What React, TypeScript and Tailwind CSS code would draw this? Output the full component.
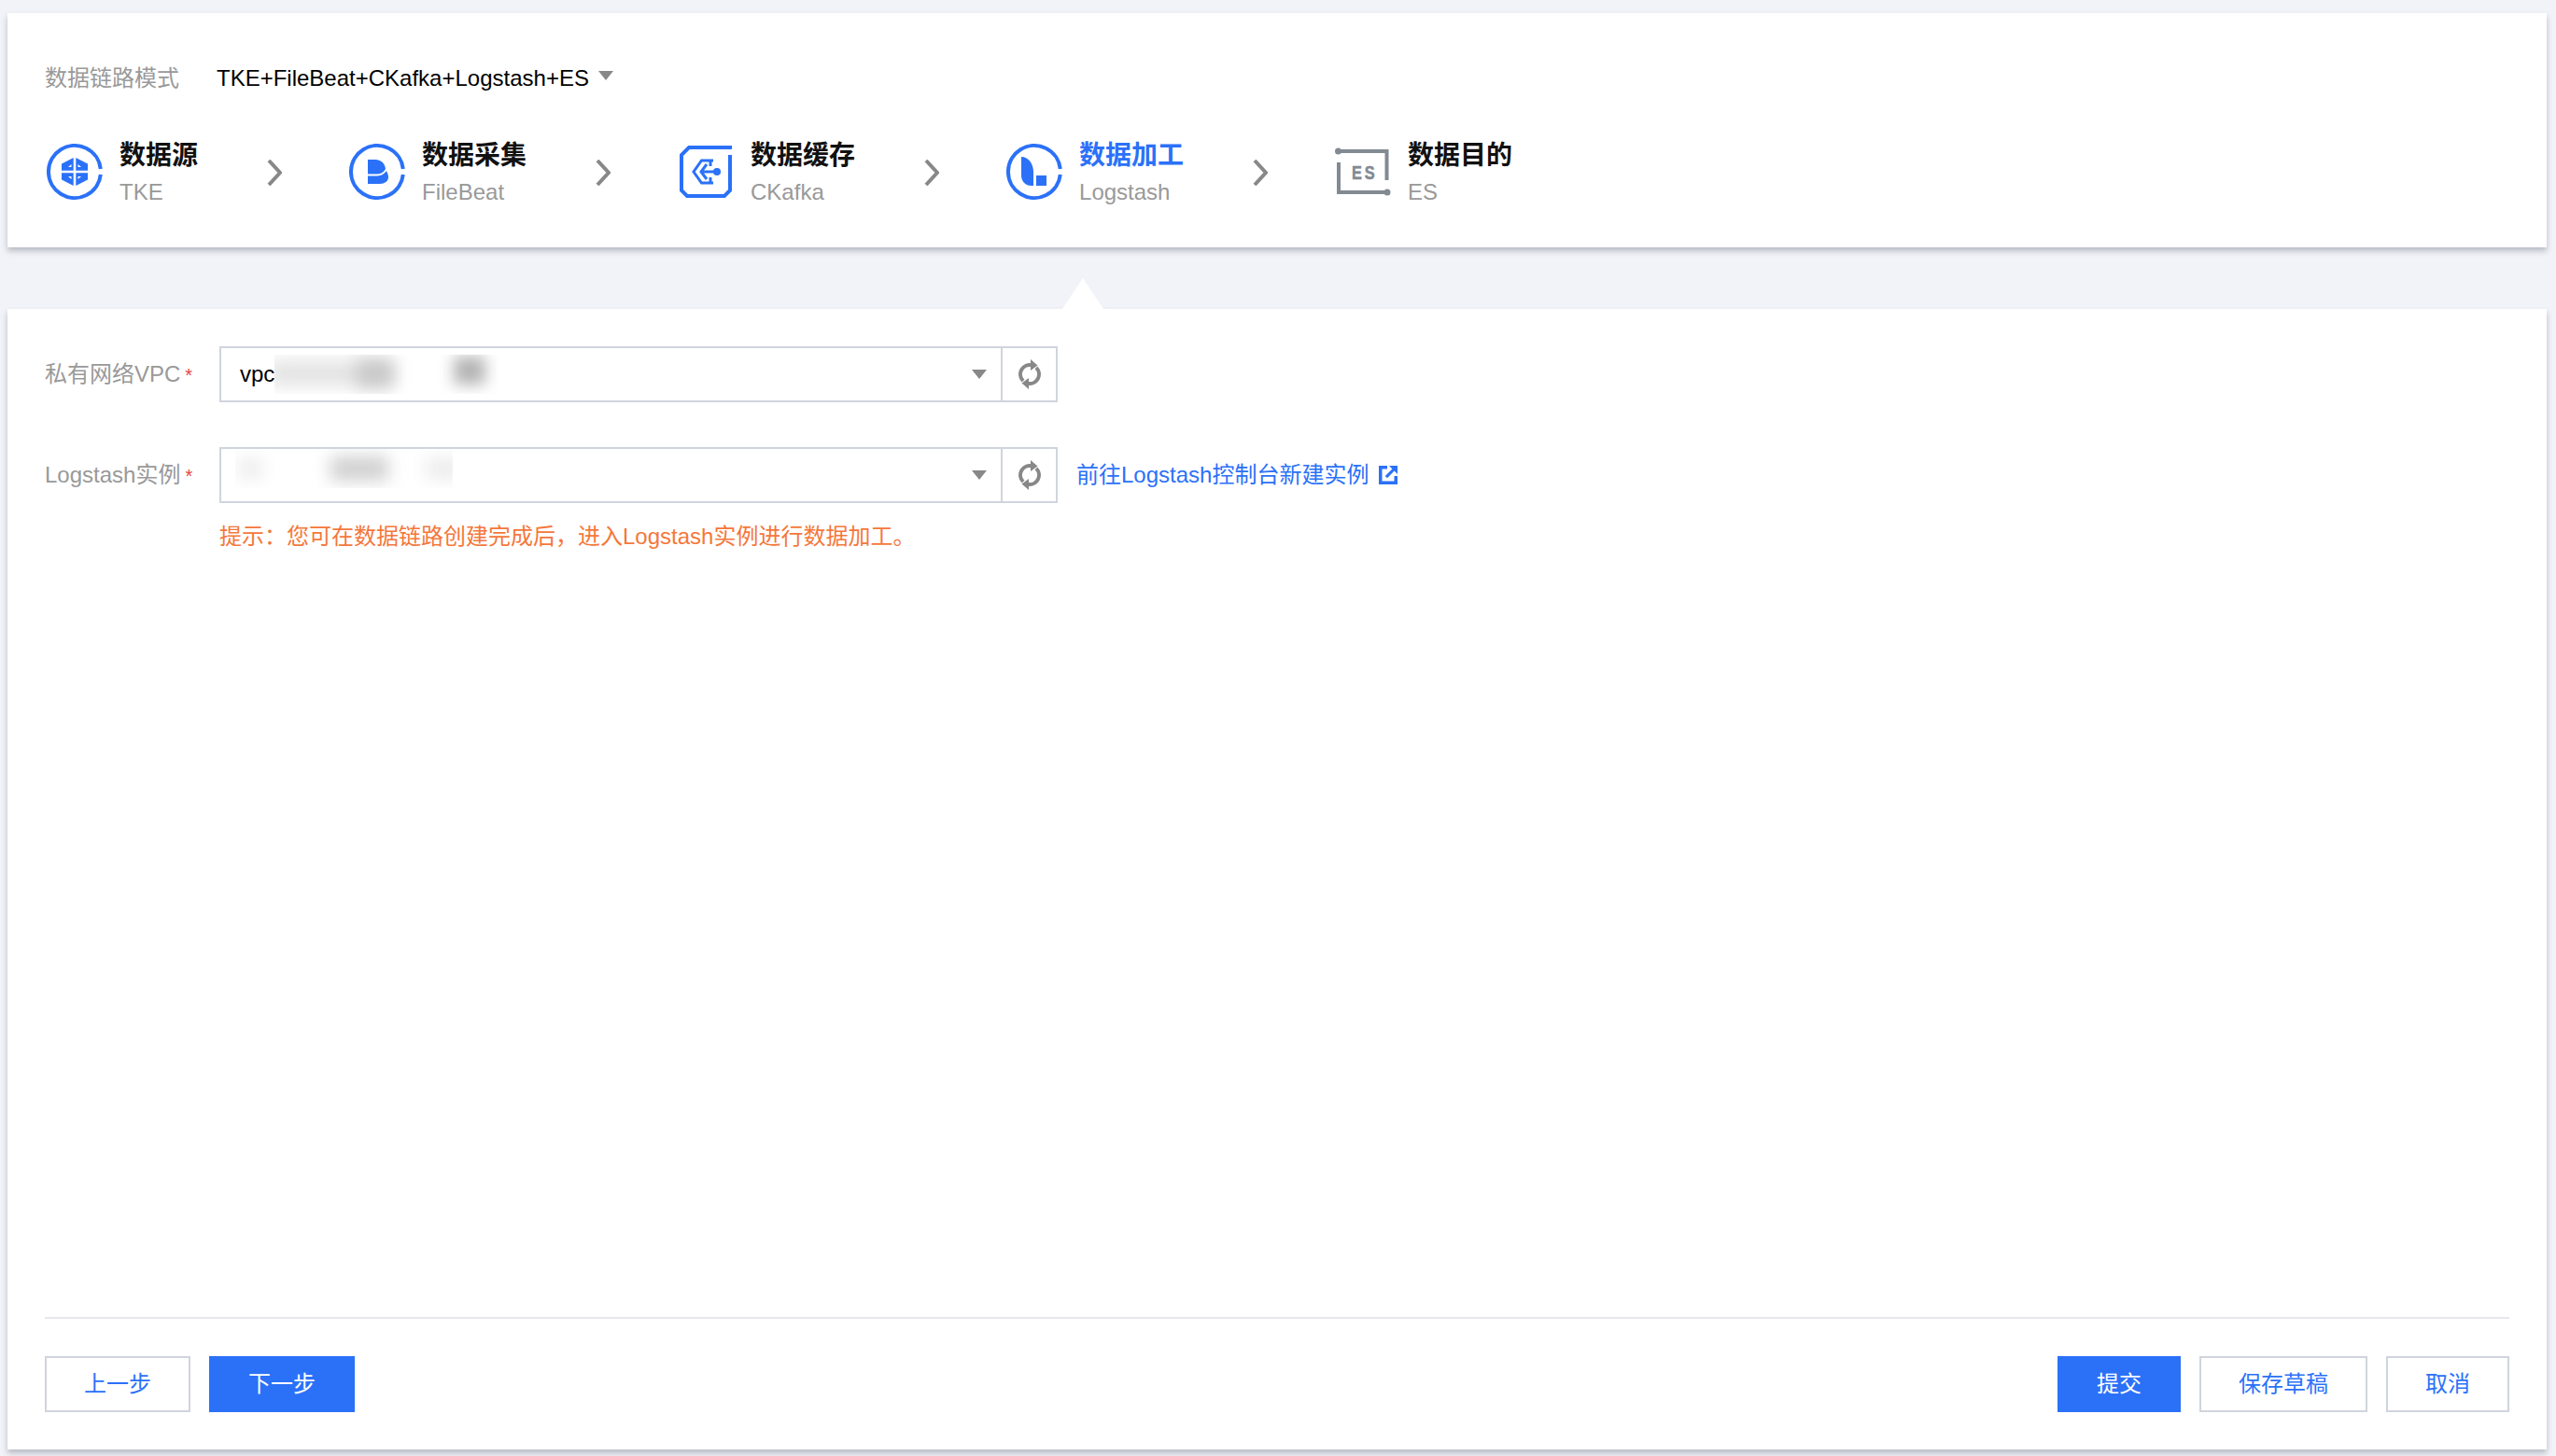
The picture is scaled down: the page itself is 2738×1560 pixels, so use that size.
import React from 'react';

const fontStack = { fontFamily: '"Liberation Sans", "Noto Sans CJK SC", sans-serif' };

function Ring() {
  return <path d="M57.8 27A28 28 0 1 0 57.8 33" fill="none" stroke="#2b71f8" strokeWidth="4" />;
}

function TkeIcon() {
  return (
    <svg width="60" height="60" viewBox="0 0 60 60" className="shrink-0 mt-[7px]">
      <Ring />
      <g fill="#2b71f8">
        <path d="M28.7 15L16 21.5V28.7H28.7Z" />
        <path d="M31.3 15L44 21.5V28.7H31.3Z" />
        <path d="M28.7 45L16 38.5V31.3H28.7Z" />
        <path d="M31.3 45L44 38.5V31.3H31.3Z" />
      </g>
      <g fill="#fff">
        <path d="M26.5 22V25H23Z" />
        <path d="M33.5 22V25H37Z" />
        <path d="M26.5 38V35H23Z" />
        <path d="M33.5 38V35H37Z" />
      </g>
    </svg>
  );
}

function FileBeatIcon() {
  return (
    <svg width="60" height="60" viewBox="0 0 60 60" className="shrink-0 mt-[7px]">
      <Ring />
      <path d="M20 17H28C35 17 39 22 39 28C41.5 31 42 34 42 36C42 40 38 43 33 43H20Z" fill="#2b71f8" />
      <path d="M19 33.5H30C34 33.5 37 32 39.5 28" fill="none" stroke="#fff" strokeWidth="1.8" />
    </svg>
  );
}

function CKafkaIcon() {
  return (
    <svg width="60" height="60" viewBox="0 0 60 60" className="shrink-0 mt-[7px]">
      <path d="M58 4H12L4 12V50L10 56H50L56 50V12" fill="none" stroke="#2b71f8" strokeWidth="4" />
      <path d="M38 18H25.5L17 30L25.5 42H38" fill="none" stroke="#2b71f8" strokeWidth="3" />
      <path d="M31 22L25 30L31 38" fill="none" stroke="#2b71f8" strokeWidth="3" />
      <path d="M27 30H42" fill="none" stroke="#2b71f8" strokeWidth="3" />
      <path d="M35 18V24M35 36V42" fill="none" stroke="#2b71f8" strokeWidth="3" />
      <circle cx="42" cy="30" r="4" fill="#2b71f8" />
    </svg>
  );
}

function LogstashIcon() {
  return (
    <svg width="60" height="60" viewBox="0 0 60 60" className="shrink-0 mt-[7px]">
      <Ring />
      <path d="M16 14C24 14 29 22 29 30V45H27C20 45 16 40 16 34Z" fill="#2b71f8" />
      <rect x="32" y="34" width="11" height="11" fill="#2b71f8" />
    </svg>
  );
}

function EsIcon() {
  return (
    <svg width="60" height="60" viewBox="0 0 60 60" className="shrink-0 mt-[7px]">
      <path d="M3 8H55.5V39" fill="none" stroke="#828a92" strokeWidth="4" />
      <path d="M4 20V52H56" fill="none" stroke="#828a92" strokeWidth="4" />
      <circle cx="3.5" cy="8" r="3.5" fill="#828a92" />
      <circle cx="56" cy="52" r="3.5" fill="#828a92" />
      <text
        transform="translate(18 38) scale(0.78 1)"
        fontSize="21"
        fontWeight="700"
        letterSpacing="3.5"
        fill="#828a92"
        stroke="#828a92"
        strokeWidth="0.5"
        fontFamily="Liberation Sans, sans-serif"
      >
        ES
      </text>
    </svg>
  );
}

function Chevron() {
  return (
    <svg width="16" height="28" viewBox="0 0 16 28" className="shrink-0 ml-[74px] mr-[72px] mt-[24px]">
      <path d="M2 1L14 14L2 27" fill="none" stroke="#888" strokeWidth="4" />
    </svg>
  );
}

function Caret() {
  return (
    <svg width="16" height="10" viewBox="0 0 16 10" className="shrink-0">
      <path d="M0 0H16L8 10Z" fill="#888" />
    </svg>
  );
}

function RefreshIcon() {
  return (
    <svg width="24" height="32" viewBox="0 0 24 32">
      <g fill="none" stroke="#888" strokeWidth="4">
        <path d="M14.5 6.3A10 10 0 0 0 5 23.1" />
        <path d="M9.5 25.7A10 10 0 0 0 19 8.9" />
      </g>
      <path d="M13 0L20.5 6.5L13 12Z" fill="#888" />
      <path d="M11 20L3.5 25.5L11 32Z" fill="#888" />
    </svg>
  );
}

function ExternalIcon() {
  return (
    <svg width="20" height="20" viewBox="0 0 20 20" className="shrink-0 ml-[11px]">
      <path d="M9 1.75H1.75V18.25H18.25V11" fill="none" stroke="#2b71f8" strokeWidth="3.5" />
      <path d="M11 0H20V9L16.6 5.6L9 13.2L6.8 11L14.4 3.4Z" fill="#2b71f8" />
    </svg>
  );
}

const steps = [
  { title: '数据源', sub: 'TKE', icon: <TkeIcon /> },
  { title: '数据采集', sub: 'FileBeat', icon: <FileBeatIcon /> },
  { title: '数据缓存', sub: 'CKafka', icon: <CKafkaIcon /> },
  { title: '数据加工', sub: 'Logstash', icon: <LogstashIcon />, active: true },
  { title: '数据目的', sub: 'ES', icon: <EsIcon /> },
];

function SelectBox({ children, text }: { children: React.ReactNode; text?: string }) {
  return (
    <div className="relative flex w-[898px] h-[60px] border-2 border-[#d0d4dd] bg-white">
      <div className="flex-1 flex items-center justify-between pl-5 pr-[15px] text-[24px] text-black">
        <span>{text}</span>
        <Caret />
      </div>
      <div className="w-[59px] shrink-0 flex items-center justify-center border-l-2 border-[#d0d4dd]">
        <RefreshIcon />
      </div>
      {children}
    </div>
  );
}

function OutlineButton({ label, width }: { label: string; width: string }) {
  return (
    <button className={`${width} h-[60px] border-2 border-[#d0d4dd] bg-white text-[24px] text-[#2b71f8]`}>{label}</button>
  );
}

function PrimaryButton({ label, width }: { label: string; width: string }) {
  return <button className={`${width} h-[60px] bg-[#2b71f8] text-[24px] text-white`}>{label}</button>;
}

export default function App() {
  return (
    <div className="w-full h-[1560px] bg-[#f2f3f8] pt-[14px] pl-2 pr-[10px] pb-[7px] flex flex-col overflow-hidden" style={fontStack}>
      <div className="h-[251px] shrink-0 bg-white pt-[52px] px-10 shadow-[0_4px_6px_0_rgba(54,58,80,0.3)]">
        <div className="flex items-center h-[36px] text-[24px] leading-[36px]">
          <span className="w-[184px] text-[#999]">数据链路模式</span>
          <span className="text-black">TKE+FileBeat+CKafka+Logstash+ES</span>
          <span className="ml-[10px] -mt-[6px]">
            <Caret />
          </span>
        </div>
        <div className="flex items-start mt-[45px] ml-[2px]">
          {steps.map((s, i) => (
            <React.Fragment key={s.title}>
              {s.icon}
              <div className="ml-[18px] shrink-0">
                <div className={`mt-[2px] text-[28px] leading-[36px] font-bold ${s.active ? 'text-[#2b71f8]' : 'text-[#111]'}`}>{s.title}</div>
                <div className="mt-[3px] text-[24px] leading-[36px] text-[#999]">{s.sub}</div>
              </div>
              {i < steps.length - 1 && <Chevron />}
            </React.Fragment>
          ))}
        </div>
      </div>

      <div className="relative mt-[66px] flex-1 flex flex-col bg-white px-10 pt-10 pb-10 shadow-[0_4px_6px_0_rgba(54,58,80,0.3)]">
        <svg width="44" height="33" viewBox="0 0 44 33" className="absolute left-[1130px] -top-[33px]">
          <path d="M22 0L44 33H0Z" fill="#fff" />
        </svg>

        <div className="flex-1">
          <div className="flex items-center">
            <div className="w-[187px] shrink-0 text-[24px] text-[#999]">
              私有网络VPC<span className="ml-[5px] text-[20px] text-[#e54545]">*</span>
            </div>
            <SelectBox text="vpc">
              <div className="absolute left-[57px] top-[7px] w-[240px] h-[42px] overflow-hidden">
                <div className="absolute left-[-6px] top-[6px] w-[130px] h-[28px] bg-[#e4e4e4] blur-[9px]" />
                <div className="absolute left-[88px] top-[6px] w-[40px] h-[28px] bg-[#c8c8c8] blur-[9px]" />
                <div className="absolute left-[192px] top-[2px] w-[34px] h-[30px] bg-[#b4b4b4] blur-[8px]" />
              </div>
            </SelectBox>
          </div>
          <div className="flex items-center mt-[48px]">
            <div className="w-[187px] shrink-0 text-[24px] text-[#999]">
              Logstash实例<span className="ml-[5px] text-[20px] text-[#e54545]">*</span>
            </div>
            <SelectBox>
              <div className="absolute left-[15px] top-0 w-[233px] h-[42px] overflow-hidden">
                <div className="absolute left-[4px] top-[10px] w-[24px] h-[22px] bg-[#ececec] blur-[9px]" />
                <div className="absolute left-[102px] top-[8px] w-[62px] h-[26px] bg-[#d0d0d0] blur-[9px]" />
                <div className="absolute left-[204px] top-[10px] w-[40px] h-[22px] bg-[#ececec] blur-[9px]" />
              </div>
            </SelectBox>
            <a className="ml-5 text-[24px] text-[#2b71f8]">前往Logstash控制台新建实例</a>
            <ExternalIcon />
          </div>
          <div className="mt-[18px] ml-[187px] text-[24px] leading-[36px] text-[#f5773a]">
            提示：您可在数据链路创建完成后，进入Logstash实例进行数据加工。
          </div>
        </div>

        <div className="border-t-2 border-[#e7e8ec] pt-10 flex justify-between">
          <div className="flex gap-5">
            <OutlineButton label="上一步" width="w-[156px]" />
            <PrimaryButton label="下一步" width="w-[156px]" />
          </div>
          <div className="flex gap-5">
            <PrimaryButton label="提交" width="w-[132px]" />
            <OutlineButton label="保存草稿" width="w-[180px]" />
            <OutlineButton label="取消" width="w-[132px]" />
          </div>
        </div>
      </div>
    </div>
  );
}
